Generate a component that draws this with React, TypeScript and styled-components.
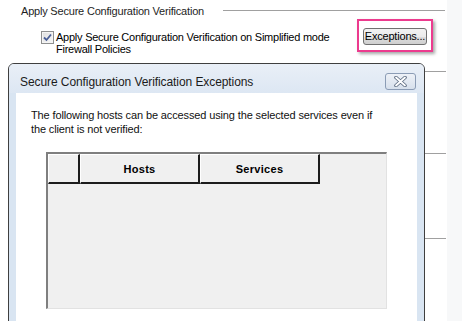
import React from 'react'
import styled, { createGlobalStyle } from 'styled-components'

const GlobalStyle = createGlobalStyle`
  body {
    margin: 0;
    background: #ffffff;
    font-family: "Liberation Sans", Arial, sans-serif;
    color: #000000;
  }
`

const Screen = styled.div`
  position: relative;
  display: flex;
  width: 462px;
  height: 321px;
  overflow: hidden;
  background: #ffffff;
`

const Main = styled.div`
  display: flex;
  flex-direction: column;
  width: 447px;
`

const SideStrip = styled.div`
  width: 15px;
  background: #f7f8f9;
`

const SectionHeader = styled.div`
  display: flex;
  align-items: center;
  height: 19px;
  padding-left: 21px;
  padding-top: 1px;
`

const SectionLabel = styled.span`
  font-size: 11px;
  letter-spacing: -0.2px;
  color: #1e1e1e;
  white-space: nowrap;
`

const Rule = styled.div`
  flex: 1;
  height: 1px;
  margin: 0 2px 0 19px;
  background: #a0a0a0;
`

const OptionRow = styled.div`
  display: flex;
  align-items: flex-start;
  padding-left: 41px;
  margin-top: -1px;
`

const Checkbox = styled.div`
  width: 13px;
  height: 13px;
  margin-top: 12px;
  box-sizing: border-box;
  border: 1px solid #8e8f8f;
  background: linear-gradient(135deg, #dedede, #f8f8f8);
  box-shadow: inset 0 0 0 1px #f4f4f4;
  display: flex;
  align-items: center;
  justify-content: center;
`

const OptionText = styled.div`
  margin: 12px 0 0 2px;
  font-size: 11px;
  line-height: 12px;
  letter-spacing: -0.24px;
  white-space: nowrap;
`

const Spacer = styled.div`
  flex: 1;
`

const Highlight = styled.div`
  margin-right: 14px;
  padding: 7px 4px 5px 4px;
  border: 2px solid #ec3b8e;
  box-shadow: 2px 2px 3px rgba(0, 0, 0, 0.35);
`

const Button = styled.div`
  width: 64px;
  height: 17px;
  box-sizing: border-box;
  border: 1px solid #707070;
  border-radius: 3px;
  background: linear-gradient(#f2f2f2 0%, #ebebeb 50%, #dddddd 51%, #cfcfcf 100%);
  font-size: 11px;
  line-height: 15px;
  letter-spacing: -0.2px;
  text-align: center;
  color: #000;
`

const Separator = styled.div<{ $gap: number }>`
  height: 1px;
  margin: ${p => p.$gap}px 1px 0 21px;
  background: #a0a0a0;
`

const Dialog = styled.div`
  position: absolute;
  left: 8px;
  top: 63px;
  width: 417px;
  height: 300px;
  box-sizing: border-box;
  border: 1px solid #3f3f3f;
  border-radius: 6px 6px 0 0;
  background: #d9e5f2;
  display: flex;
  flex-direction: column;
`

const TitleBar = styled.div`
  display: flex;
  align-items: center;
  height: 29px;
  padding: 6px 8px 0 11px;
  box-sizing: border-box;
  border-radius: 5px 5px 0 0;
  background: linear-gradient(#e9eff7, #dde7f3);
`

const Title = styled.span`
  flex: 1;
  font-size: 12px;
  color: #1b1b1b;
  letter-spacing: -0.08px;
`

const CloseButton = styled.div`
  width: 31px;
  height: 17px;
  box-sizing: border-box;
  border: 1px solid #8b9cb5;
  border-radius: 3px;
  background: linear-gradient(#edf1f7, #d7e0ec);
  display: flex;
  align-items: center;
  justify-content: center;
`

const Client = styled.div`
  flex: 1;
  margin: 0 7px;
  background: #ffffff;
  padding: 15px 0 0 15px;
`

const Intro = styled.p`
  margin: 0;
  font-size: 11px;
  line-height: 14px;
  letter-spacing: -0.13px;
  color: #111;
`

const Grid = styled.div`
  width: 341px;
  height: 157px;
  margin: 16px 0 0 15px;
  box-sizing: border-box;
  background: #f0f0f0;
  border-top: 2px solid #7f7f7f;
  border-left: 2px solid #7f7f7f;
  border-right: 1px solid #e2e2e2;
  border-bottom: 1px solid #e2e2e2;
`

const HeaderRow = styled.div`
  display: flex;
`

const HeaderCell = styled.div<{ $width: number }>`
  width: ${p => p.$width}px;
  height: 30px;
  box-sizing: border-box;
  border-top: 1px solid #ffffff;
  border-left: 1px solid #ffffff;
  border-right: 2px solid #1c1c1c;
  border-bottom: 2px solid #1c1c1c;
  font-size: 11px;
  font-weight: bold;
  letter-spacing: 0.3px;
  display: flex;
  align-items: center;
  justify-content: center;
`

function CheckMark() {
  return (
    <svg width="9" height="9" viewBox="0 0 9 9">
      <path d="M1 4.5 L3.5 7 L8 1.5" fill="none" stroke="#4a5f97" strokeWidth="1.8" />
    </svg>
  )
}

function CloseGlyph() {
  return (
    <svg width="13" height="11" viewBox="0 0 13 11">
      <path d="M2 1.5 L11 9.5 M11 1.5 L2 9.5" stroke="#5d6c82" strokeWidth="3.6" strokeLinecap="round" />
      <path d="M2 1.5 L11 9.5 M11 1.5 L2 9.5" stroke="#ffffff" strokeWidth="1.8" strokeLinecap="round" />
    </svg>
  )
}

export default function App() {
  return (
    <Screen>
      <GlobalStyle />
      <Main>
        <SectionHeader>
          <SectionLabel>Apply Secure Configuration Verification</SectionLabel>
          <Rule />
        </SectionHeader>

        <OptionRow>
          <Checkbox>
            <CheckMark />
          </Checkbox>
          <OptionText>
            Apply Secure Configuration Verification on Simplified mode<br />
            Firewall Policies
          </OptionText>
          <Spacer />
          <Highlight>
            <Button>Exceptions...</Button>
          </Highlight>
        </OptionRow>

        <Separator $gap={16} />
        <Separator $gap={81} />
        <Separator $gap={84} />
      </Main>
      <SideStrip />

      <Dialog>
        <TitleBar>
          <Title>Secure Configuration Verification Exceptions</Title>
          <CloseButton>
            <CloseGlyph />
          </CloseButton>
        </TitleBar>
        <Client>
          <Intro>
            The following hosts can be accessed using the selected services even if<br />
            the client is not verified:
          </Intro>
          <Grid>
            <HeaderRow>
              <HeaderCell $width={32} />
              <HeaderCell $width={120}>Hosts</HeaderCell>
              <HeaderCell $width={120}>Services</HeaderCell>
            </HeaderRow>
          </Grid>
        </Client>
      </Dialog>
    </Screen>
  )
}
